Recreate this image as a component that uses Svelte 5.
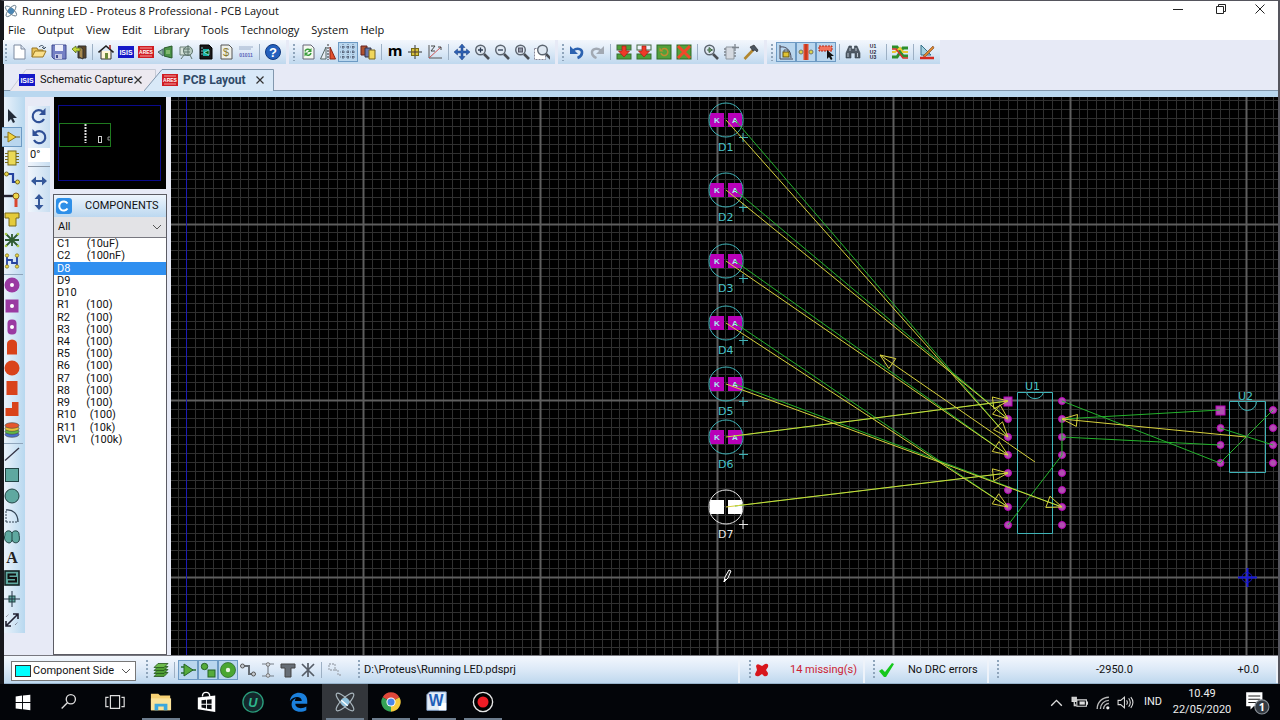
<script>
  const menus = ['File', 'Output', 'View', 'Edit', 'Library', 'Tools', 'Technology', 'System', 'Help'];

  const lens = (inner) =>
    `<path d="M10 10l5 5" stroke="#4a4e55" stroke-width="2.6"/><circle cx="6.5" cy="6" r="4.8" fill="#dfe8f2" stroke="#5c6570" stroke-width="1.4"/>${inner}`;
  const board = (fill) =>
    `<rect x="1" y="1" width="14" height="5" fill="${fill}" stroke="#456b45"/><rect x="1" y="10" width="14" height="5" fill="#4ca03a" stroke="#376e2e"/><path d="M6 2h4v5h3.500L8 13 2.500 7H6z" fill="#f03a28" stroke="#a01c14" stroke-width=".7"/>`;

  const icons = {
    new: '<path d="M3 1h7l4 4v10H3z" fill="#fff" stroke="#7d8aa0"/><path d="M10 1v4h4" fill="#d9e2ee" stroke="#7d8aa0"/>',
    open: '<path d="M1 13V4h5l1 2h5v2" fill="#e8c35a" stroke="#9a7620"/><path d="M1 13l3-6h11l-3 6z" fill="#fbe08a" stroke="#9a7620"/><path d="M8 3c3-3 5-1 5 1m-2-1l2 2 2-2" fill="none" stroke="#456"/>',
    save: '<path d="M1 1h14v14H3l-2-2z" fill="#7480c4" stroke="#414b90"/><rect x="4" y="1" width="8" height="6" fill="#eef0fa"/><rect x="4" y="10" width="7" height="5" fill="#c6cae4"/><rect x="5" y="11" width="2" height="3" fill="#414b90"/>',
    close: '<path d="M7 2h8v12H7z" fill="#5a4526" stroke="#333"/><path d="M8 2l4 3v10l-4-2z" fill="#a88a50" stroke="#333"/><path d="M5 2L1 5l4 4V7h4V4H5z" fill="#c6d839" stroke="#57701a" stroke-width=".8"/>',
    home: '<path d="M3 7v8h10V7" fill="#fff6d8" stroke="#333"/><path d="M0.500 8.500L8 2l7.500 6.500" fill="none" stroke="#222" stroke-width="1.600"/><path d="M12 1v4" stroke="#a22" stroke-width="1.500"/><rect x="7" y="9" width="3" height="6" fill="#6a8a3a"/>',
    isis: '<rect x="0" y="2" width="16" height="12" fill="#1418c8"/><text x="8" y="11" text-anchor="middle" font-size="7" font-weight="bold" fill="#fff" font-family="Liberation Sans,sans-serif">ISIS</text>',
    ares: '<rect x="0" y="2" width="16" height="12" fill="#d01c22"/><text x="8" y="10" text-anchor="middle" font-size="5" font-weight="bold" fill="#fff" font-family="Liberation Sans,sans-serif">ARES</text><path d="M2 4h12M2 12h12" stroke="#f0a0a0"/>',
    view3d: '<path d="M6 4l8-2v12l-8-2z" fill="#4c9347" stroke="#28592a"/><path d="M5 5L0 8l5 4z" fill="#8db6a0" stroke="#4c6470"/><path d="M8 6h4v4H8z" fill="#82b86d"/>',
    gerber: '<path d="M2 3h8v8H2z" fill="#d8e4dc" stroke="#6a7f77"/><circle cx="10" cy="7" r="4.500" fill="#b8ccc2" stroke="#5e746c"/><path d="M3 15l3-4h6l2 4M5 5h7M6 8h6M10 1v11" fill="none" stroke="#5e746c"/>',
    design: '<path d="M2 1h9l3 3v11H2z" fill="#181818" stroke="#000"/><path d="M5 5h6v7H5z" fill="#17b2a6"/><path d="M11 6L6 8.500 11 11zM3 4h2M3 7h2M3 10h2" fill="#050" stroke="#9ee" stroke-width=".8"/>',
    bill: '<path d="M3 1h8l3 3v11H3z" fill="#eef0ea" stroke="#555"/><text x="8" y="12" text-anchor="middle" font-size="11" fill="#8b7a2e" font-family="Liberation Sans,sans-serif">$</text>',
    binary: '<path d="M1 3h14M1 5h12" stroke="#9cadc8"/><text x="8" y="13" text-anchor="middle" font-size="5" font-weight="bold" fill="#5a62b8" font-family="Liberation Sans,sans-serif">01011</text>',
    help: '<circle cx="8" cy="8" r="7.500" fill="#2460bd" stroke="#123a80"/><text x="8" y="12.500" text-anchor="middle" font-size="13" font-weight="bold" fill="#fff" font-family="Liberation Sans,sans-serif">?</text>',
    redraw: '<path d="M3 1h8l3 3v11H3z" fill="#f4f8f0" stroke="#667"/><path d="M5 7.500C5.500 5 8.500 4.500 10 6M11 9c-.5 2.500-3.500 3-5 1.500" fill="none" stroke="#3a9c3d" stroke-width="1.500"/><path d="M11.500 4v4h-4zM4.500 12.500v-4h4z" fill="#3a9c3d"/>',
    flip: '<path d="M6 3v12H0.500z" fill="#e8edf4" stroke="#566"/><path d="M10 3v12h5.500z" fill="#e4502e" stroke="#8c2412"/><path d="M8 0v16" stroke="#333" stroke-dasharray="2 1"/>',
    grid: '<path d="M3 0v16M8 0v16M13 0v16M0 3h16M0 8h16M0 13h16" stroke="#5a6c88" stroke-dasharray="1 1"/><path d="M2.500 3h1M7.500 3h1M12.500 3h1M2.500 8h1M7.500 8h1M12.500 8h1M2.500 13h1M7.500 13h1M12.500 13h1" stroke="#223" stroke-width="1.500"/>',
    layers: '<path d="M1 2h6v9H1z" fill="#b0522e" stroke="#622"/><path d="M5 4h6v9H5z" fill="#6676ae" stroke="#334"/><path d="M9 6h6v9H9z" fill="#f0d65c" stroke="#76631c"/>',
    m: '<text x="8" y="12" text-anchor="middle" font-size="15" font-weight="bold" fill="#000" font-family="Open Sans,sans-serif">m</text>',
    origin: '<path d="M8 1v14M1 8h14" stroke="#333"/><rect x="4.500" y="4.500" width="7" height="7" fill="#d8c23a" stroke="#766a1a"/><path d="M8 5v6M5 8h6" stroke="#433"/>',
    axes: '<path d="M2 1v13h13" fill="none" stroke="#555"/><path d="M2 14L14 3" stroke="#c55"/><path d="M4 2h4l-4 5h4M11 3h3v3" fill="none" stroke="#444"/>',
    pan: '<path d="M8 0l3 3.500H9V7h3.500V5L16 8l-3.500 3V9H9v3.500h2L8 16l-3-3.500h2V9H3.500v2L0 8l3.500-3v2H7V3.500H5z" fill="#2f62b4" stroke="#1b3d7c" stroke-width=".5"/>',
    zin: lens('<path d="M6.500 3.500v5M4 6h5" stroke="#2b3a50" stroke-width="1.300"/>'),
    zout: lens('<path d="M4 6h5" stroke="#2b3a50" stroke-width="1.300"/>'),
    zall: lens('<rect x="4.500" y="4" width="4" height="4" fill="#8b95a2" stroke="#556"/>'),
    zarea: `<rect x=".5" y="4.500" width="11" height="11" fill="#fff" stroke="#889" stroke-dasharray="2 1"/><g transform="translate(2 0)">${lens('')}</g>`,
    undo: '<path d="M4 6.500C9 3 13.500 5.500 13 9c-.3 2.500-2 4-4.500 5" fill="none" stroke="#2c62b0" stroke-width="2.600"/><path d="M1 2v8h8z" fill="#2c62b0"/>',
    redo: '<path d="M12 6.500C7 3 2.500 5.500 3 9c.3 2.500 2 4 4.500 5" fill="none" stroke="#a2a9b3" stroke-width="2.400"/><path d="M15 2v8H7z" fill="#a2a9b3"/>',
    place1: board('#4ca03a'),
    place2: board('#eef4fb'),
    rot: '<rect x="1" y="1" width="14" height="14" fill="#52a03c" stroke="#2f6a26"/><path d="M5 9a3.500 3.500 0 1 0 1-3.500" fill="none" stroke="#c08a30" stroke-width="1.500"/><path d="M3.500 3.500v4h4z" fill="#c08a30"/>',
    del: '<rect x="1" y="1" width="14" height="14" fill="#52a03c" stroke="#2f6a26"/><path d="M2 2l12 12M14 2L2 14" stroke="#f0492a" stroke-width="3"/>',
    pick: lens('<path d="M4 6h2m2 0h2M6 3.500v5L9 6z" fill="#7a9c70" stroke="#3f6a48"/>'),
    pack: '<path d="M3 3h8v12H3z" fill="#d4d9e0" stroke="#8f979f"/><path d="M1 5h2M1 8h2M1 11h2M11 9h2M11 12h2M12 0v7M9 3.500h7" stroke="#7d858e" stroke-width="1.300"/>',
    hammer: '<path d="M1.500 15L10 6" stroke="#b28730" stroke-width="2.600"/><path d="M7 3l4-2 4 5-1 2-2-2-2 1z" fill="#4b5560" stroke="#222" stroke-width=".6"/>',
    lock: '<path d="M2 1v14h13M2 3c6-1 11 3 11 11" fill="none" stroke="#445"/><rect x="5" y="8" width="6" height="5" fill="#e0c332" stroke="#665510"/><path d="M6 8V6h4v2" fill="none" stroke="#555"/>',
    neck: '<path d="M5.500 0h5v16h-5z" fill="#e24a2c"/><path d="M8 0v16" stroke="#a82a18"/><circle cx="3" cy="8" r="2" fill="#ddd24a" stroke="#776"/><circle cx="13" cy="8" r="2" fill="#ddd24a" stroke="#776"/>',
    select: '<rect x="1" y="2" width="13" height="5" fill="#f2745e" stroke="#b12818" stroke-dasharray="2 1"/><path d="M9 6v9l2-2 2 3 1.500-1L13 12h3z" fill="#111"/>',
    bino: '<path d="M4 2h2.500v3h3V2H12l3 7v5h-5V9H6v5H1V9z" fill="#4f5964" stroke="#38434e" stroke-width=".6"/><path d="M3 9v4M12.500 9v4M5 4v3M11 4v3" stroke="#b9c4cf"/>',
    u123: '<g font-family="Liberation Sans,sans-serif" font-size="5" font-weight="bold" fill="#223" text-anchor="middle"><text x="8" y="4">U1</text><text x="8" y="10">U2</text><text x="8" y="15">U3</text></g>',
    route: '<path d="M0 3h5l6 9h5M0 13h5l6-9h5" fill="none" stroke="#2c8f2c" stroke-width="3"/><path d="M0 8h3l5-4 3 4h5" fill="none" stroke="#e9c934" stroke-width="2"/><path d="M0 5h4l7 9h5" fill="none" stroke="#d4332a" stroke-width="1.500"/>',
    drc: '<path d="M2 1v10h10z" fill="#a4d0de" stroke="#347189"/><path d="M4 12L14 2l1 2-9 9z" fill="#d8892f" stroke="#83411a" stroke-width=".6"/><path d="M1 14h14" stroke="#d3281f" stroke-width="2.500"/>',
    arrow: '<path d="M4 1v13l3-3 2 4 2-1-2-4h4z" fill="#222b38"/>',
    comp: '<path d="M0 8h16" stroke="#665b22"/><path d="M4 3l8 5-8 5z" fill="#f1d13c" stroke="#8c7418"/>',
    chip: '<rect x="4" y="1" width="8" height="14" fill="#ead956" stroke="#776b1d"/><path d="M1 3.500h3M1 6.500h3M1 9.500h3M1 12.500h3M12 3.500h3M12 6.500h3M12 9.500h3M12 12.500h3" stroke="#776b1d"/>',
    track: '<path d="M2 4h7v8h5" fill="none" stroke="#2643a0" stroke-width="2.200"/><circle cx="2.500" cy="4" r="2" fill="#ecd84a" stroke="#776b1d"/><circle cx="13.500" cy="12" r="2" fill="#ecd84a" stroke="#776b1d"/>',
    via: '<path d="M0 5h11" stroke="#223" stroke-width="2.400"/><path d="M12 5v11" stroke="#d9472e" stroke-width="3"/><circle cx="12" cy="5" r="3" fill="#ecd84a" stroke="#8a5f1d"/>',
    zone: '<path d="M1 2h14v5h-3v8H5V7H1z" fill="#e4cb3a" stroke="#7a6a1c"/>',
    ratsnest: '<path d="M2 2l12 12M14 2L2 14M8 2v12M1 8h14" stroke="#2d5a30" stroke-width="1.800"/><g fill="#a9c94a"><circle cx="2" cy="2" r="1.300"/><circle cx="14" cy="2" r="1.300"/><circle cx="2" cy="14" r="1.300"/><circle cx="14" cy="14" r="1.300"/></g>',
    conn: '<path d="M3 3v10M13 3v10M3 7h5v3h5" fill="none" stroke="#2643a0" stroke-width="1.800"/><g fill="#ecd84a" stroke="#776b1d" stroke-width=".7"><circle cx="3" cy="2.500" r="1.700"/><circle cx="13" cy="2.500" r="1.700"/><circle cx="3" cy="13.500" r="1.700"/><circle cx="13" cy="13.500" r="1.700"/></g>',
    padr: '<circle cx="8" cy="8" r="7.500" fill="#9a3aa2"/><circle cx="8" cy="8" r="2" fill="#fff"/>',
    pads: '<rect x="1.500" y="1.500" width="13" height="13" fill="#9a3aa2"/><circle cx="8" cy="8" r="2" fill="#fff"/>',
    pado: '<rect x="3.500" y=".5" width="9" height="15" rx="4" fill="#9a3aa2"/><circle cx="8" cy="8" r="2" fill="#fff"/>',
    dshape: '<path d="M3 15.500V5q0-4 5-4.500 5 .5 5 4.500v10.500z" fill="#d9431a"/>',
    rcirc: '<circle cx="8" cy="8" r="7.500" fill="#d9431a"/>',
    rsq: '<rect x="2.500" y="1" width="11" height="14" fill="#d9431a"/>',
    rpoly: '<path d="M1.500 7H8V1h6.500v14h-13z" fill="#d9431a"/>',
    stack: '<g stroke="#444" stroke-width=".6"><ellipse cx="8" cy="12.500" rx="7" ry="2.800" fill="#4a6ed0"/><ellipse cx="8" cy="9.500" rx="7" ry="2.800" fill="#5fb746"/><ellipse cx="8" cy="6.500" rx="7" ry="2.800" fill="#e8c43a"/><ellipse cx="8" cy="3.500" rx="7" ry="2.800" fill="#e4572e"/></g>',
    line: '<path d="M1 14.500L15 2" stroke="#334" stroke-width="1.300"/>',
    box: '<rect x="1.500" y="1.500" width="13" height="13" fill="#5fa8a0" stroke="#244"/>',
    circ: '<circle cx="8" cy="8" r="7" fill="#5fa8a0" stroke="#244"/>',
    arc: '<path d="M2 14V2" stroke="#345" stroke-dasharray="2 1"/><path d="M2 2c7-1 12 4 12 12" fill="none" stroke="#345" stroke-width="1.300"/><path d="M2 14h12" stroke="#345" stroke-dasharray="2 1"/>',
    path: '<path d="M8 4c-2-4-8-2-7 2-1 2-1 7 4 8 2 0 3-2 3-3 1 3 5 4 7 1 1-3 0-5 0-7 0-4-6-4-7-1z" fill="#5fa8a0" stroke="#244"/><path d="M8 4v7" stroke="#244"/>',
    text: '<text x="8" y="13" text-anchor="middle" font-size="16" font-weight="bold" fill="#222" font-family="Liberation Serif,serif">A</text>',
    symbol: '<rect x="1" y="1" width="14" height="14" fill="#5fa8a0" stroke="#122" stroke-width="1.600"/><path d="M12 4.500H4.500v3.500H12v3.500H4" fill="none" stroke="#111" stroke-width="2"/>',
    marker: '<path d="M8 0v16M0 8h16" stroke="#234"/><rect x="5" y="5" width="6" height="6" fill="#5fa8a0" stroke="#244"/><path d="M8 5v6M5 8h6" stroke="#234"/>',
    dim: '<path d="M2 14L14 2M9 2h5v5M2 9v5h5" fill="none" stroke="#223" stroke-width="1.600"/><path d="M2 5l3-3M11 13l3-3" stroke="#667" stroke-dasharray="1 1"/>',
    cw: '<path d="M13 11a6 6 0 1 1-1-7" fill="none" stroke="#2e4f96" stroke-width="2.200"/><path d="M14.500 0v7H8z" fill="#2e4f96"/>',
    ccw: '<path d="M3 11a6 6 0 1 0 1-7" fill="none" stroke="#2e4f96" stroke-width="2.200"/><path d="M1.500 0v7H8z" fill="#2e4f96"/>',
    mh: '<path d="M0 8l5-4.500V7h6V3.500L16 8l-5 4.500V9H5v3.500z" fill="#35589a"/>',
    mv: '<path d="M8 0l4.500 5H9v6h3.500L8 16l-4.500-5H7V5H3.500z" fill="#35589a"/>',
    sheets: '<g fill="#4f9e34" stroke="#23541a" stroke-width=".8"><path d="M1 14.500l4-4h10l-4 4z"/><path d="M1 11.500l4-4h10l-4 4z"/><path d="M1 8.500l4-4h10l-4 4z"/><path d="M1 5.500l4-4h10l-4 4z" fill="#6cba4c"/></g>',
    fcomp: '<path d="M1 5h4M1 11h4M12 8h4" stroke="#266d30" stroke-width="1.500"/><path d="M4 2v12l9-6z" fill="#56ab3a" stroke="#246325"/>',
    fgfx: '<circle cx="4.500" cy="4.500" r="3.200" fill="#56ab3a" stroke="#246325"/><rect x="8" y="8" width="7" height="7" fill="#56ab3a" stroke="#246325"/>',
    fpad: '<circle cx="8" cy="8" r="7.500" fill="#4aa632" stroke="#246325" stroke-width=".7"/><circle cx="8" cy="8" r="2.200" fill="#e9f4e2"/>',
    ftrack: '<path d="M2 4h7v8h5" fill="none" stroke="#666d75" stroke-width="2"/><circle cx="2.500" cy="4" r="2" fill="#c5cad0" stroke="#555"/><circle cx="13.500" cy="12" r="2" fill="#c5cad0" stroke="#555"/>',
    fvia: '<path d="M2 2h12M2 14h12M8 4v8" stroke="#777f88" stroke-width="1.200"/><circle cx="8" cy="2.500" r="1.800" fill="#d5dae0" stroke="#777"/><circle cx="8" cy="13.500" r="1.800" fill="#d5dae0" stroke="#777"/>',
    fzone: '<path d="M1 2h14v4h-4v9H5V6H1z" fill="#666d75" stroke="#444"/>',
    frats: '<path d="M2 2l12 12M14 2L2 14M8 1v14" stroke="#555c66" stroke-width="1.700"/>',
    fmulti: '<path d="M2 2h6v6H2zM8 8h3v5h4" fill="none" stroke="#a4acb6" stroke-width="1.300" stroke-dasharray="2 1"/>',
    cross: '<path d="M2 4q1-3 4-1l2 1 3-2q4-1 3 3l-2 3 2 3q0 4-4 3l-2-2-3 2q-4 1-4-2l2-4z" fill="#d8161c"/>',
    tick: '<path d="M1 9l3-2 3 3 7-9 2 1-8 13H6z" fill="#16c81c"/>',
    compass: '<rect x="0" y="0" width="16" height="16" rx="3" fill="#2e8fe8"/><path d="M11.500 5.500A4.500 4.500 0 1 0 11.500 10.500" fill="none" stroke="#fff" stroke-width="2"/>',
    atom: '<g fill="none" stroke="#587080" stroke-width="1"><ellipse cx="8" cy="8" rx="8" ry="3" transform="rotate(40 8 8)"/><ellipse cx="8" cy="8" rx="8" ry="3" transform="rotate(-50 8 8)"/></g><circle cx="8" cy="8" r="3.500" fill="#4a86b4"/>'
  };

  const toolbars = [
    [['new', 'open', 'save', 'close'], ['home', 'isis', 'ares', 'view3d', 'gerber', 'design', 'bill', 'binary'], ['help']],
    [['redraw', 'flip', 'grid', 'layers'], ['m', 'origin', 'axes'], ['pan', 'zin', 'zout', 'zall', 'zarea']],
    [['undo', 'redo'], ['place1', 'place2', 'rot', 'del'], ['pick', 'pack', 'hammer']],
    [['lock', 'neck', 'select'], ['bino', 'u123'], ['route'], ['drc']]
  ];
  const pressed = new Set(['grid', 'lock', 'neck', 'select', 'comp', 'fcomp', 'fgfx', 'fpad']);

  const modes = [
    ['arrow', 'comp', 'chip', 'track', 'via', 'zone', 'ratsnest', 'conn'],
    ['padr', 'pads', 'pado', 'dshape', 'rcirc', 'rsq', 'rpoly', 'stack'],
    ['line', 'box', 'circ', 'arc', 'path', 'text', 'symbol', 'marker', 'dim']
  ];
  const filters = [['sheets'], ['fcomp', 'fgfx', 'fpad', 'ftrack', 'fvia', 'fzone', 'frats'], ['fmulti']];

  const parts = [
    'C1      (10uF)', 'C2      (100nF)', 'D8', 'D9', 'D10',
    'R1      (100)', 'R2      (100)', 'R3      (100)', 'R4      (100)', 'R5      (100)',
    'R6      (100)', 'R7      (100)', 'R8      (100)', 'R9      (100)',
    'R10     (100)', 'R11     (10k)', 'RV1     (100k)'
  ];
  let selected = $state('D8');

  // Board coordinates; the drawing group shifts them into the canvas.
  const step = 176.65 / 20;
  let minor = '';
  let major = '';
  for (let i = -62; i < 220; i++) {
    const x = Math.round(716.5 + i * step) + 0.5;
    const y = Math.round(224.5 + i * step) - 0.5;
    // The board's left edge takes the place of one grid column.
    const d = (i === -60 ? '' : `M${x} 90V2000`) + `M160 ${y}H2800`;
    if (i % 20 === 0 && i !== -60) major += d;
    else minor += d;
  }

  const diodes = [120, 190, 261, 323, 384, 437, 507].map((y, i) => ({ y, name: `D${i + 1}`, picked: i === 6 }));
  const u1 = [401, 419, 437, 455, 473, 490, 507, 525];
  const u2 = [410, 428, 445, 463];
  const vectors = [
    [726, 120, 1008, 437], [726, 190, 1008, 419], [726, 261, 1008, 455], [726, 323, 1008, 507],
    [726, 384, 1062, 507], [726, 437, 1008, 401], [726, 507, 1008, 473],
    [1035, 462, 880, 355], [1246, 437, 1062, 419]
  ];
  const nets = [
    [735, 120, 1008, 437], [735, 190, 1008, 419], [735, 261, 1008, 455], [735, 323, 1008, 507],
    [735, 384, 1062, 507], [735, 436, 1008, 401], [735, 506, 1008, 473],
    [1062, 401, 1220, 463], [1062, 419, 1220, 410], [1062, 437, 1220, 445], [1062, 419, 1062, 455],
    [1062, 455, 1008, 525], [1220, 428, 1273, 445], [1220, 463, 1273, 410]
  ];
  function head([x1, y1, x2, y2]) {
    const len = Math.hypot(x2 - x1, y2 - y1);
    const ux = (x2 - x1) / len;
    const uy = (y2 - y1) / len;
    const bx = x2 - ux * 15;
    const by = y2 - uy * 15;
    return `${x2},${y2} ${bx - uy * 6},${by + ux * 6} ${bx + uy * 6},${by - ux * 6}`;
  }

  const apps = [
    { id: 'Start', art: '<path d="M4 6l7-1v7H4zM12 5l8-1v8h-8zM4 13h7v7l-7-1zM12 13h8v8l-8-1z" fill="#fff"/>' },
    { id: 'Search', art: '<circle cx="14" cy="9" r="5" fill="none" stroke="#ddd" stroke-width="1.500"/><path d="M10.500 12.500L4 19" stroke="#ddd" stroke-width="1.500"/>' },
    { id: 'Task View', art: '<path d="M7 5h10v14H7zM5 7H2v10h3M19 7h3v10h-3" fill="none" stroke="#ddd" stroke-width="1.300"/>' },
    { id: 'File Explorer', open: true, art: '<path d="M1 3h8l2 2h11v16H1z" fill="#f7d173"/><path d="M1 8h22v13H1z" fill="#fbe39a"/><path d="M5 21v-7h14v7h-4v-4H9v4z" fill="#3ba7dd"/>' },
    { id: 'Store', art: '<path d="M2 7l19-2v18L2 20z" fill="#fff"/><path d="M7 6c0-6 8-6 8 0" fill="none" stroke="#fff" stroke-width="1.500"/><path d="M6 10l5-.5v4.500H6zM12 9.500l5-.5v5h-5zM6 15h5v4L6 18zM12 15h5v5l-5-.7z" fill="#0a0c10"/>' },
    { id: 'Uninstaller', art: '<circle cx="12" cy="12" r="11" fill="#14282c" stroke="#2a9d7c" stroke-width="1.500"/><text x="12" y="17" text-anchor="middle" font-size="14" font-weight="bold" font-style="italic" fill="#2fb78c" font-family="Liberation Sans,sans-serif">U</text>' },
    { id: 'Edge', art: '<path d="M2 11C3 4 8 2 12 2c6 0 9 4 9 9v3H8c0 5 7 6 12 3v4c-7 4-17 1-16-7 0-3 2-5 5-6-1 1-2 2-1 3h7c0-6-9-6-13 0z" fill="#1b80dc"/>' },
    { id: 'Proteus', open: true, active: true, art: '<g fill="none" stroke="#a9b6be" stroke-width="1.200"><ellipse cx="12" cy="12" rx="13" ry="4" transform="rotate(45 12 12)"/><ellipse cx="12" cy="12" rx="13" ry="4" transform="rotate(-45 12 12)"/></g><circle cx="12" cy="12" r="4.500" fill="#8ec0dc"/><path d="M8 10l7 6" stroke="#fff" stroke-width="1.500"/>' },
    { id: 'Chrome', open: true, art: '<path d="M12 12L2.900 6.700A10.500 10.500 0 0 1 21.100 6.700z" fill="#e0483a"/><path d="M12 12L21.100 6.700A10.500 10.500 0 0 1 12 22.500z" fill="#f6cb3c"/><path d="M12 12v10.500A10.500 10.500 0 0 1 2.900 6.700z" fill="#35a256"/><circle cx="12" cy="12" r="5" fill="#fff"/><circle cx="12" cy="12" r="3.900" fill="#4a86e8"/>' },
    { id: 'Word', open: true, art: '<path d="M4 1h18v20H1V4z" fill="#e3edf8" stroke="#8fb0dc"/><path d="M14 13h8v8h-8z" fill="#fff"/><text x="11" y="16" text-anchor="middle" font-size="17" font-weight="bold" fill="#1f5fb8" font-family="Liberation Sans,sans-serif">W</text>' },
    { id: 'Recorder', open: true, art: '<circle cx="12" cy="12" r="10.500" fill="#000" stroke="#e6e6e6" stroke-width="1.500"/><circle cx="12" cy="12" r="6" fill="#ee1c25"/>' }
  ];
</script>

{#snippet icon(name)}
  <svg class="icon" viewBox="0 0 16 16" aria-hidden="true">{@html icons[name]}</svg>
{/snippet}

{#snippet tool(name)}
  <button class="tool" class:pressed={pressed.has(name)} aria-label={name}>{@render icon(name)}</button>
{/snippet}

<div class="window">
  <header class="titlebar">
    {@render icon('atom')}
    <h1>Running LED - Proteus 8 Professional - PCB Layout</h1>
    <div class="winbtns">
      <button aria-label="Minimize"><svg viewBox="0 0 12 12"><path d="M1 6.500h10" /></svg></button>
      <button aria-label="Restore"><svg viewBox="0 0 12 12"><path d="M1.500 3.500h7v7h-7zM3.500 3V1.500h7v7H9" /></svg></button>
      <button aria-label="Close"><svg viewBox="0 0 12 12"><path d="M1.500 1.500l9 9M10.500 1.500l-9 9" /></svg></button>
    </div>
  </header>

  <nav class="menubar">
    {#each menus as m}<button>{m}</button>{/each}
  </nav>

  <div class="toolrow">
    {#each toolbars as bar}
      <div class="bar">
        <span class="grip"></span>
        {#each bar as group, i}
          {#if i > 0}<span class="sep"></span>{/if}
          {#each group as name}{@render tool(name)}{/each}
        {/each}
      </div>
    {/each}
  </div>

  <div class="tabs">
    <button class="tab first">
      <svg class="shape" viewBox="0 0 146 22" preserveAspectRatio="none"><path d="M0 22L16 .5H145.500V22" fill="#ece9f0" stroke="#c8cbd6" /></svg>
      {@render icon('isis')}<span>Schematic Capture</span>
      <svg class="x" viewBox="0 0 8 8"><path d="M.5 .5l7 7M7.500 .5l-7 7" /></svg>
    </button>
    <button class="tab active">
      <svg class="shape" viewBox="0 0 130 22" preserveAspectRatio="none"><path d="M0 22L18 .5H129.500V22" fill="#d9e9f8" stroke="#8298ae" /></svg>
      {@render icon('ares')}<span>PCB Layout</span>
      <svg class="x" viewBox="0 0 8 8"><path d="M.5 .5l7 7M7.500 .5l-7 7" /></svg>
    </button>
  </div>

  <main class="work">
    <aside class="modes">
      {#each modes as group, i}
        <div class="modegroup" class:long={i === 2}>
          {#each group as name}{@render tool(name)}{/each}
        </div>
      {/each}
    </aside>

    <aside class="orient">
      <div class="orientbox">
        {@render tool('cw')}
        {@render tool('ccw')}
        <input aria-label="Rotation angle" value="0°" />
        <span class="rule"></span>
        {@render tool('mh')}
        {@render tool('mv')}
      </div>
    </aside>

    <aside class="panel">
      <svg class="overview" viewBox="0 0 112 92">
        <rect width="112" height="92" fill="#000" />
        <rect x="4.500" y="8.500" width="102" height="75" fill="none" stroke="#0a0a8c" />
        <rect x="5.500" y="26.500" width="51" height="23" fill="none" stroke="#1f7a1f" />
        <path d="M31.500 27v19" stroke="#ddd" stroke-width="2" stroke-dasharray="2 1" />
        <rect x="44.500" y="39.500" width="3" height="6" fill="none" stroke="#ccc" />
        <path d="M56 40h-2v3h2" fill="none" stroke="#999" />
      </svg>
      <section class="components">
        <h2>{@render icon('compass')}<span>COMPONENTS</span></h2>
        <div class="combo">
          <select aria-label="Component filter"><option>All</option></select>
          <svg class="chev" viewBox="0 0 10 6"><path d="M1 1l4 4 4-4" /></svg>
        </div>
        <ul>
          {#each parts as part}
            {@const id = part.split(' ')[0]}
            <li><button class:selected={selected === id} onclick={() => (selected = id)}>{part}</button></li>
          {/each}
        </ul>
      </section>
    </aside>

    <svg class="canvas" role="img" aria-label="Board layout">
      <g transform="translate(-171 -97)">
        <path d={minor} stroke="#303030" />
        <path d={major} stroke="#5e5e5e" stroke-width="2" />
        <path d="M160 577.500H2800" stroke="#5e5e5e" />
        <path d="M186.500 90V2000" stroke="#1c1cb4" />

        <g fill="none" stroke="#1414c0">
          <circle cx="1247" cy="577.500" r="5" />
          <path d="M1247.500 568v19M1238 577.500h19" stroke="#1818d8" stroke-width="2" />
        </g>

        {#each diodes as d}
          <g class="part" class:picked={d.picked}>
            <rect x="710" y={d.y - 7} width="14" height="14" />
            <rect x="728" y={d.y - 7} width="14" height="14" />
            {#if !d.picked}
              <text class="padname" x="717" y={d.y + 3}>K</text>
              <text class="padname" x="735" y={d.y + 3}>A</text>
            {/if}
            <circle cx="726" cy={d.y} r="17" />
            <path d="M743 {d.y + 13}v9M739 {d.y + 17.5}h9" />
            <text class="ref" x="718" y={d.y + 31}>{d.name}</text>
          </g>
        {/each}

        <g class="part">
          <path d="M1026.500 392.500h-9v141h35v-141h-9a9 9 0 0 1-17 0zM1026.500 392.500h17" />
          <path d="M1238.500 401.500h-9v71h36v-71h-9a9 9 0 0 1-18 0zM1238.500 401.500h18" />
          <text class="ref" x="1025" y="390">U1</text>
          <text class="ref" x="1238" y="400">U2</text>
        </g>

        <g class="pins">
          <rect x="1004" y="397" width="8" height="9" />
          <rect x="1216" y="406" width="9" height="9" />
          {#each u1 as y, i}
            {#if i > 0}<circle cx="1008" cy={y} r="3.500" />{/if}
            <circle cx="1062" cy={y} r="3.500" />
          {/each}
          {#each u2 as y, i}
            {#if i > 0}<circle cx="1220.500" cy={y} r="3.500" />{/if}
            <circle cx="1273" cy={y} r="3.500" />
          {/each}
        </g>

        {#each nets as n}<line class="net" x1={n[0]} y1={n[1]} x2={n[2]} y2={n[3]} />{/each}
        {#each vectors as v}
          <line class="vec" x1={v[0]} y1={v[1]} x2={v[2]} y2={v[3]} />
          <polygon class="vec" points={head(v)} />
        {/each}

        <path d="M724 582l1-5 4-7 2 1-3 7z" fill="#222" stroke="#fff" />
        <path d="M724 582l1-3 1 1z" fill="#fff" stroke="#fff" />
      </g>
    </svg>
  </main>

  <footer class="status">
    <div class="layer">
      <span class="swatch"></span>
      <select aria-label="Layer"><option>Component Side</option></select>
      <svg class="chev" viewBox="0 0 10 6"><path d="M1 1l4 4 4-4" /></svg>
    </div>
    <div class="bar filters">
      <span class="grip"></span>
      {#each filters as group, i}
        {#if i > 0}<span class="sep"></span>{/if}
        {#each group as name}{@render tool(name)}{/each}
      {/each}
    </div>
    <div class="cell grow"><span class="grip"></span><span>D:\Proteus\Running LED.pdsprj</span></div>
    <div class="cell missing"><span class="grip"></span>{@render icon('cross')}<span>14 missing(s)</span></div>
    <div class="cell drc"><span class="grip"></span>{@render icon('tick')}<span>No DRC errors</span></div>
    <div class="cell coords"><span class="grip"></span><span class="cx">-2950.0</span><span class="cy">+0.0</span></div>
  </footer>
</div>

<div class="taskbar">
  {#each apps as app}
    <button class="app" class:open={app.open} class:active={app.active} aria-label={app.id}>
      <svg viewBox="0 0 24 24">{@html app.art}</svg>
    </button>
  {/each}
  <div class="tray">
    <svg viewBox="0 0 16 16"><path d="M3 11l5-5 5 5" fill="none" stroke="#ddd" stroke-width="1.300" /></svg>
    <svg viewBox="0 0 16 16"><path d="M5.500 5.500h9v6h-9zM15.500 7v3" fill="none" stroke="#ddd" /><path d="M8 7h5v3H8z" fill="#ddd" /><path d="M1 3h4v4H1zM3 7v4h2" fill="#ccc" stroke="#ddd" /></svg>
    <svg viewBox="0 0 16 16"><path d="M3 14A11 11 0 0 1 14 3M6 14a8 8 0 0 1 8-8M9 14a5 5 0 0 1 5-5" fill="none" stroke="#bbb" stroke-width="1.300" /><circle cx="13" cy="13" r="1.500" fill="#eee" /></svg>
    <svg viewBox="0 0 16 16"><path d="M1 6h2.500L7 3v10l-3.500-3H1zM9 6q1.500 2 0 4M11 4q3 4 0 8M13 3q4 5 0 10" fill="none" stroke="#ddd" /></svg>
    <span class="lang">IND</span>
    <time><span>10.49</span><span>22/05/2020</span></time>
    <svg class="notes" viewBox="0 0 24 24"><path d="M2 3h15v13H9l-3 3v-3H2z" fill="#fff" /><path d="M4 6.500h11M4 9.500h11M4 12.500h7" stroke="#222" /><circle cx="16.500" cy="16.500" r="6.500" fill="#333a42" stroke="#888f96" /><text x="16.500" y="20" text-anchor="middle">1</text></svg>
  </div>
</div>

<style>
  :global(body) { margin: 0; background: #000; }
  :global(#app) {
    display: flex; flex-direction: column; min-height: 100vh;
    font: 11px/14px Roboto, "Liberation Sans", sans-serif; color: #111;
  }
  button, input, select { font: inherit; color: inherit; border: 0; margin: 0; padding: 0; background: none; }
  h1, h2, ul { margin: 0; padding: 0; font-weight: 400; list-style: none; }
  .icon { width: 16px; height: 16px; flex: none; display: block; }

  .window {
    flex: 1; display: flex; flex-direction: column; min-width: 0;
    border-left: 4px solid #17171b; border-right: 2px solid #55555d;
    border-top: 1px solid #55555d; background: #e7eaf6;
  }
  .titlebar { display: flex; align-items: center; height: 19px; background: #fff; gap: 4px; }
  .titlebar .icon { width: 14px; }
  h1 { font: 11px/16px "Open Sans", sans-serif; }
  .winbtns { margin-left: auto; display: flex; align-self: flex-start; }
  .winbtns button { width: 43px; height: 16px; display: grid; place-items: center; }
  .winbtns button:last-child { width: 36px; }
  .winbtns svg { width: 12px; height: 12px; fill: none; stroke: #222; }

  .menubar { display: flex; gap: 12px; height: 20px; padding-left: 4px; background: #fff; }
  .menubar button { font: 11px/20px "Open Sans", sans-serif; }

  .toolrow { display: flex; gap: 3px; height: 24px; }
  .toolrow .bar:first-child { margin-left: -1px; }
  .bar { display: flex; align-items: center; padding-right: 3px; background: linear-gradient(#f3f7fd, #dce9f7 50%, #bfd8ee); }
  .toolrow .bar:first-child .grip { width: 6px; background-position: 1px 0; }
  .grip { width: 9px; flex: none; align-self: stretch; margin: 3px 0; background: radial-gradient(circle, #8fa5bb 1px, transparent 1px) 3px 0 / 4px 4px repeat-y; }
  .sep { width: 1px; height: 16px; margin: 0 3px; flex: none; background: #9db0c4; }
  .tool { width: 20px; height: 20px; flex: none; display: grid; place-items: center; border: 1px solid transparent; box-sizing: border-box; }
  .tool.pressed { background: #b9d6ee; border-color: #6d9ac4; }

  .tabs { display: flex; height: 33px; box-sizing: border-box; padding: 5px 0 0 6px; border-bottom: 6px solid #b9d7ef; box-shadow: inset 0 -1px 0 #8298ae; }
  .tab { position: relative; display: flex; align-items: center; height: 22px; white-space: nowrap; }
  .tab > :global(*) { position: relative; }
  .tab .shape { position: absolute; left: 0; top: 0; width: 100%; height: 100%; }
  .tab.first { width: 146px; padding-left: 9px; }
  .tab.first span { margin-left: 5px; }
  .tab.active { width: 130px; padding-left: 18px; margin-left: -12px; font: 700 12px/14px Roboto, sans-serif; color: #2f4a68; }
  .tab.active span { margin-left: 5px; }
  .x { width: 8px; height: 8px; stroke: #333; stroke-width: 1.2; margin: 0 14px 0 auto; }
  .tab.active .x { margin-right: 10px; }

  .work { flex: 1; display: flex; min-height: 558px; border-bottom: 1px solid #77777f; }
  .modes { width: 21px; align-self: flex-start; padding: 9px 0 3px; display: flex; flex-direction: column; gap: 4px; background: linear-gradient(90deg, #eaf2fb, #b8d8ef); }
  .modegroup { display: grid; grid-auto-rows: 1fr; height: 165px; align-items: center; margin-left: -2px; }
  .modegroup.long { height: 186px; }
  .modegroup + .modegroup { box-shadow: 0 -3px 0 -2px #8fa5bb; }
  .modes .tool { border-left: 0; }
  .orient { width: 28px; padding-top: 9px; box-sizing: border-box; }
  .orientbox { width: 22px; margin-left: 3px; display: flex; flex-direction: column; align-items: center; gap: 1px; background: linear-gradient(90deg, #f0f5fc, #c8def1); }
  .orient input { width: 100%; height: 14px; background: #fff; padding-left: 2px; box-sizing: border-box; }
  .rule { width: 100%; height: 1px; background: #8e9aa8; margin: 3px 0; }
  .panel { width: 114px; display: flex; flex-direction: column; gap: 5px; margin-right: 4px; }
  .overview { display: block; width: 112px; height: 92px; margin-left: 1px; }
  .components { flex: 1; display: flex; flex-direction: column; border: 1px solid #5c5c64; background: #fff; }
  h2 { display: flex; align-items: center; gap: 13px; height: 22px; padding-left: 2px; font-size: 11px; background: linear-gradient(#eef5fd, #bcd8f0); }
  .combo { display: flex; align-items: center; position: relative; height: 20px; background: #e3e3e6; border-bottom: 1px solid #77777f; }
  select { appearance: none; flex: 1; min-width: 0; padding-left: 4px; height: 100%; }
  .chev { width: 10px; height: 6px; fill: none; stroke: #555; position: absolute; right: 4px; pointer-events: none; }
  ul { display: grid; grid-auto-rows: 1fr; height: 208px; }
  li { display: grid; min-height: 0; }
  li button { text-align: left; white-space: pre; padding-left: 3px; line-height: 12px; }
  li button.selected { background: #2f8ff0; color: #fff; }

  .canvas { flex: 1; min-width: 0; background: #000; }
  .part { fill: none; stroke: #3fb4b8; }
  .part rect { fill: #b800b8; stroke: none; }
  .part.picked { stroke: #e8e8e8; }
  .part.picked rect { fill: #fff; }
  .ref { font: 11px "DejaVu Sans", sans-serif; fill: #48c4c8; stroke: none; }
  .picked .ref { fill: #e8e8e8; }
  .padname { font: 700 8px "Liberation Sans", sans-serif; text-anchor: middle; fill: #a8f0f0; stroke: none; }
  .pins { fill: #b050b0; stroke: #b800b8; stroke-width: 1px; }
  .net { stroke: #24b42c; }
  .vec { stroke: #d8d23c; fill: none; }

  .status { display: flex; height: 27px; border-bottom: 1px solid #98b4cc; background: linear-gradient(#f3f7fd, #dce9f7 50%, #bfd8ee); white-space: nowrap; }
  .status .bar { background: none; }
  .layer { width: 125px; height: 20px; margin: 5px 6px 0 7px; box-sizing: border-box; border: 1px solid #777; background: #fff; display: flex; align-items: center; position: relative; }
  .swatch { width: 16px; height: 12px; margin-left: 3px; border: 1px solid #333; box-sizing: border-box; background: #0ff; }
  .layer select { padding-left: 2px; }
  .filters { margin-right: 6px; }
  .cell { display: flex; align-items: center; border-right: 2px solid #eef3fa; box-sizing: border-box; }
  .cell.grow { flex: 1; min-width: 0; gap: 1px; }
  .missing { width: 125px; padding-left: 5px; color: #cc2233; }
  .missing span:last-child { margin-left: 20px; }
  .drc { width: 124px; padding-left: 4px; }
  .drc span:last-child { margin-left: 14px; }
  .coords { width: 289px; padding-left: 4px; padding-right: 17px; }
  .cx { margin-left: 94px; }
  .cy { margin-left: auto; }

  .taskbar { display: flex; height: 36px; background: #030509; color: #eee; }
  .app { width: 46px; height: 36px; display: grid; place-items: center; position: relative; }
  .app svg { width: 22px; height: 22px; }
  .app.active { background: #33363b; }
  .app.open { background-image: linear-gradient(#6d7d8e, #6d7d8e); background-size: 38px 2px; background-position: center bottom; background-repeat: no-repeat; }
  .tray { margin-left: auto; display: flex; align-items: center; gap: 6px; padding-right: 10px; font: 11px/16px Roboto, sans-serif; }
  .tray svg { width: 17px; height: 17px; }
  .lang { margin: 0 6px 0 4px; }
  time { display: flex; flex-direction: column; align-items: center; width: 56px; }
  .tray .notes { width: 26px; height: 26px; margin-left: 8px; }
  .notes text { font: 700 10px "Open Sans", sans-serif; fill: #fff; }
</style>
